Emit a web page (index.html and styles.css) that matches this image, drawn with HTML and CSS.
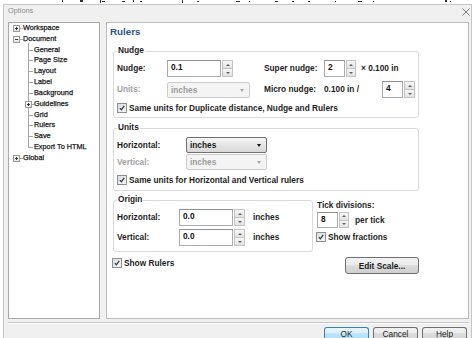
FILE: index.html
```html
<!DOCTYPE html>
<html>
<head>
<meta charset="utf-8">
<link rel="stylesheet" href="styles.css">
</head>
<body>
<svg class="behind" width="474" height="4" viewBox="0 0 474 4">
  <g fill="#333">
    <rect x="62" y="0" width="1" height="2"/><rect x="80" y="0" width="3" height="2"/><rect x="100" y="0" width="1" height="3"/>
    <rect x="102" y="1" width="3" height="1"/><rect x="122" y="1" width="3" height="1"/><rect x="133" y="0" width="1" height="2"/>
    <rect x="140" y="1" width="2" height="1"/><rect x="182" y="0" width="1" height="3"/><rect x="197" y="1" width="2" height="1"/>
    <rect x="236" y="1" width="4" height="1"/><rect x="249" y="1" width="1" height="1"/><rect x="275" y="1" width="3" height="1"/>
    <rect x="292" y="1" width="2" height="1"/><rect x="308" y="1" width="2" height="1"/><rect x="335" y="1" width="1" height="1"/>
    <rect x="358" y="1" width="4" height="1"/><rect x="373" y="1" width="1" height="1"/><rect x="445" y="0" width="2" height="2"/>
    <rect x="450" y="1" width="1" height="1"/>
  </g>
</svg>
<div class="dialog">
  <div class="titlebar">
    <span class="title">Options</span>
    <svg class="close" width="8" height="8" viewBox="0 0 8 8"><path d="M0.5 0.5 L7.5 7.5 M7.5 0.5 L0.5 7.5" stroke="#7a7a7a" stroke-width="1" fill="none"/></svg>
  </div>
  <div class="main">
    <div class="tree">
      <div class="node root"><span class="exp plus"></span>Workspace</div>
      <div class="node root"><span class="exp minus"></span>Document</div>
      <div class="children">
        <div class="node child">General</div>
        <div class="node child">Page Size</div>
        <div class="node child">Layout</div>
        <div class="node child">Label</div>
        <div class="node child">Background</div>
        <div class="node child haskids"><span class="exp plus"></span>Guidelines</div>
        <div class="node child">Grid</div>
        <div class="node child selected">Rulers</div>
        <div class="node child">Save</div>
        <div class="node child">Export To HTML</div>
      </div>
      <div class="node root"><span class="exp plus"></span>Global</div>
    </div>
    <div class="content">
      <div class="heading">Rulers</div>
      <div class="col">
        <div class="group nudge">
          <span class="legend">Nudge</span>
          <div class="row r17">
            <span class="lbl w50">Nudge:</span>
            <span class="field"><span class="input w54">0.1</span><span class="spin w11"><span class="up"></span><span class="down"></span></span></span>
            <span class="lbl w60 ml31">Super nudge:</span>
            <span class="field"><span class="input w21">2</span><span class="spin w10"><span class="up"></span><span class="down"></span></span></span>
            <span class="lbl ml5">× 0.100 in</span>
          </div>
          <div class="row r17 mt4">
            <span class="lbl w50 dis">Units:</span>
            <span class="select disabled w83">inches<span class="arrow"></span></span>
            <span class="lbl w60 ml14">Micro nudge:</span>
            <span class="lbl w58">0.100 in /</span>
            <span class="field"><span class="input w21">4</span><span class="spin w11"><span class="up"></span><span class="down"></span></span></span>
          </div>
          <div class="row r12 mt4">
            <span class="check"><svg width="10" height="10" viewBox="0 0 10 10"><path d="M2.3 5.2 L4.2 7.3 L7.8 2.4" stroke="#26344f" stroke-width="1.5" fill="none"/></svg></span>
            <span class="lbl">Same units for Duplicate distance, Nudge and Rulers</span>
          </div>
        </div>

        <div class="group units">
          <span class="legend">Units</span>
          <div class="row r16">
            <span class="lbl w69">Horizontal:</span>
            <span class="select w81">inches<span class="arrow"></span></span>
          </div>
          <div class="row r16 mt1">
            <span class="lbl w69 dis">Vertical:</span>
            <span class="select disabled w81">inches<span class="arrow"></span></span>
          </div>
          <div class="row r12 mt4">
            <span class="check"><svg width="10" height="10" viewBox="0 0 10 10"><path d="M2.3 5.2 L4.2 7.3 L7.8 2.4" stroke="#26344f" stroke-width="1.5" fill="none"/></svg></span>
            <span class="lbl">Same units for Horizontal and Vertical rulers</span>
          </div>
        </div>

        <div class="origin-row">
          <div class="group origin">
            <span class="legend">Origin</span>
            <div class="row r17">
              <span class="lbl w62">Horizontal:</span>
              <span class="field"><span class="input w54">0.0</span><span class="spin w11"><span class="up"></span><span class="down"></span></span></span>
              <span class="lbl ml8">inches</span>
            </div>
            <div class="row r17 mt3">
              <span class="lbl w62">Vertical:</span>
              <span class="field"><span class="input w54">0.0</span><span class="spin w11"><span class="up"></span><span class="down"></span></span></span>
              <span class="lbl ml8">inches</span>
            </div>
          </div>
          <div class="tick">
            <div class="lbl tick-title">Tick divisions:</div>
            <div class="row r16 mt2">
              <span class="field"><span class="input w21">8</span><span class="spin w10"><span class="up"></span><span class="down"></span></span></span>
              <span class="lbl ml6">per tick</span>
            </div>
            <div class="row r12 mt3">
              <span class="check"><svg width="10" height="10" viewBox="0 0 10 10"><path d="M2.3 5.2 L4.2 7.3 L7.8 2.4" stroke="#26344f" stroke-width="1.5" fill="none"/></svg></span>
              <span class="lbl">Show fractions</span>
            </div>
          </div>
        </div>

        <div class="bottom-row">
          <div class="row r12 show-rulers">
            <span class="check"><svg width="10" height="10" viewBox="0 0 10 10"><path d="M2.3 5.2 L4.2 7.3 L7.8 2.4" stroke="#26344f" stroke-width="1.5" fill="none"/></svg></span>
            <span class="lbl">Show Rulers</span>
          </div>
          <span class="btn edit">Edit Scale...</span>
        </div>
      </div>
    </div>
  </div>
  <div class="sep"></div>
  <div class="buttons">
    <span class="btn dlg default">OK</span>
    <span class="btn dlg">Cancel</span>
    <span class="btn dlg">Help</span>
  </div>
</div>
</body>
</html>
```
FILE: styles.css
```css
* { box-sizing: border-box; }
html, body { margin: 0; padding: 0; }
body {
  background: #fff;
  width: 474px;
  height: 338px;
  overflow: hidden;
  font-family: "Liberation Sans", Arial, sans-serif;
  color: #1e1e1e;
}
.behind { display: block; }

.dialog {
  margin-left: 3px;
  width: 469px;
  height: 334px;
  border: 1px solid #c6c6c6;
  border-bottom: none;
  background: #f0f0f0;
}
.titlebar {
  height: 17px;
  display: flex;
  align-items: flex-start;
  justify-content: space-between;
  padding: 1px 1px 0 4px;
}
.title {
  font-size: 7.3px;
  line-height: 10px;
  color: #8e8e8e;
}
.close { margin-top: 2px; margin-right: 0; }

.main {
  display: flex;
  gap: 6px;
  padding-left: 4px;
  height: 297px;
}

/* tree */
.tree {
  width: 92px;
  height: 297px;
  border: 1px solid #a9a9a9;
  background: #fff;
}
.node {
  position: relative;
  height: 10.83px;
  line-height: 10.83px;
  font-size: 7.3px;
  color: #1a1a1a;
  white-space: nowrap;
  -webkit-text-stroke: 0.25px #1a1a1a;
}
.root { padding-left: 14px; }
.child { padding-left: 25px; }
.exp {
  position: absolute;
  top: 2px;
  width: 7px;
  height: 7px;
  border: 1px solid #9a9a9a;
  background: linear-gradient(#ffffff, #e6e6e6);
  -webkit-text-stroke: 0;
}
.root .exp { left: 4px; }
.root .exp::after {
  content: "";
  position: absolute;
  left: 6px;
  top: 2px;
  width: 3px;
  height: 1px;
  background: #a8a8a8;
}
.exp::before {
  content: "";
  position: absolute;
  left: 1px;
  top: 2px;
  width: 3px;
  height: 1px;
  background: #333;
}
.plus {
  background:
    linear-gradient(#333, #333) 2px 1px / 1px 3px no-repeat,
    linear-gradient(#ffffff, #e6e6e6);
}
.children { position: relative; }
.children::before {
  content: "";
  position: absolute;
  left: 19px;
  top: -2px;
  bottom: 5px;
  width: 1px;
  background: #a8a8a8;
}
.child::before {
  content: "";
  position: absolute;
  left: 20px;
  top: 5px;
  width: 4px;
  height: 1px;
  background: #a8a8a8;
}
.haskids .exp { left: 16px; z-index: 1; }
.haskids::before { left: 23px; width: 2px; }

/* content panel */
.content {
  width: 363px;
  height: 297px;
  border: 1px solid #bcbcbc;
  background: #fff;
}
.heading {
  margin: 3px 0 0 3px;
  font-size: 9.8px;
  line-height: 12px;
  font-weight: bold;
  color: #2c5592;
}
.col {
  margin-left: 6px;
  width: 306px;
  margin-top: 13px;
}
.group {
  position: relative;
  border: 1px solid #dadada;
  border-radius: 3px;
}
.legend {
  position: absolute;
  top: -7px;
  left: 3px;
  padding: 0 1px;
  background: #fff;
  font-size: 8.3px;
  line-height: 11px;
  font-weight: bold;
}
.nudge { padding: 8px 0 3px 3px; }
.units { margin-top: 10px; padding: 8px 0 4px 3px; }
.origin { width: 200px; padding: 8px 0 5px 3px; }

.row { display: flex; align-items: center; }
.r17 { height: 17px; }
.r16 { height: 16px; }
.r12 { height: 12px; }
.mt1 { margin-top: 1px; }
.mt2 { margin-top: 2px; }
.mt3 { margin-top: 3px; }
.mt4 { margin-top: 4px; }

.lbl {
  font-size: 8.3px;
  font-weight: bold;
  line-height: 11px;
  white-space: nowrap;
  color: #1e1e1e;
}
.dis { color: #a2a2a2; }
.w50 { width: 50px; flex: none; }
.w58 { width: 58px; flex: none; }
.w60 { width: 60px; flex: none; }
.w62 { width: 62px; flex: none; }
.w69 { width: 69px; flex: none; }
.ml5 { margin-left: 5px; }
.ml6 { margin-left: 6px; }
.ml8 { margin-left: 8px; }
.ml14 { margin-left: 14px; }
.ml31 { margin-left: 31px; }

.field { display: flex; height: 17px; }
.r16 .field { height: 16px; }
.input {
  height: 100%;
  border: 1px solid #a9abb2;
  border-top-color: #8e9096;
  background: #fff;
  font-size: 8.3px;
  font-weight: bold;
  line-height: 12px;
  padding-left: 3px;
  color: #111;
}
.w54 { width: 54px; }
.w21 { width: 21px; }
.w81 { width: 81px; }
.w83 { width: 83px; }
.spin {
  display: flex;
  flex-direction: column;
  height: 100%;
  margin-left: 1px;
}
.w11 { width: 11px; }
.w10 { width: 10px; }
.spin span {
  position: relative;
  flex: 1;
  border: 1px solid #c4c4c4;
  background: linear-gradient(#f7f7f7, #e2e2e2);
}
.spin span + span { margin-top: -1px; }
.spin .up::after, .spin .down::after {
  content: "";
  position: absolute;
  left: 50%;
  top: 50%;
  margin-left: -2px;
  margin-top: -1px;
  border-left: 2px solid transparent;
  border-right: 2px solid transparent;
}
.spin .up::after { border-bottom: 2px solid #606060; }
.spin .down::after { border-top: 2px solid #606060; }

.select {
  position: relative;
  height: 16px;
  border: 1px solid #707070;
  border-radius: 2px;
  background: linear-gradient(#f6f6f6, #e6e6e6 50%, #d8d8d8);
  font-size: 8.3px;
  font-weight: bold;
  line-height: 14px;
  padding-left: 3px;
  color: #1a1a1a;
}
.select.disabled {
  border-color: #cdcdcd;
  background: #f4f4f4;
  color: #9c9c9c;
}
.select .arrow {
  position: absolute;
  right: 5px;
  top: 6px;
  border-left: 2.5px solid transparent;
  border-right: 2.5px solid transparent;
  border-top: 3px solid #111;
}
.select.disabled .arrow { border-top-color: #aaa; }

.check {
  width: 10px;
  height: 10px;
  flex: none;
  margin-right: 2px;
  border: 1px solid #8e8f8f;
  background: linear-gradient(135deg, #dcdcdc, #f8f8f8);
  display: flex;
  align-items: center;
  justify-content: center;
}
.check svg { display: block; width: 8px; height: 8px; }

.origin-row {
  display: flex;
  align-items: flex-start;
  margin-top: 9px;
}
.tick { margin-left: 3px; }
.tick-title { line-height: 10px; margin-left: 1px; }
.tick .field { margin-left: 1px; }

.bottom-row {
  display: flex;
  align-items: flex-start;
  margin-top: 5px;
}
.show-rulers { margin-left: -1px; margin-top: 0; }

.btn {
  display: flex;
  align-items: center;
  justify-content: center;
  height: 17px;
  border: 1px solid #707070;
  border-radius: 3px;
  background: linear-gradient(#f2f2f2, #ebebeb 50%, #dddddd 50%, #cfcfcf);
  font-size: 8.3px;
  color: #1e1e1e;
}
.edit {
  margin-left: auto;
  width: 74px;
  font-weight: bold;
}

.sep {
  margin: 3px 2px 0 4px;
  height: 2px;
  border-top: 1px solid #c8c8c8;
  border-bottom: 1px solid #fff;
}
.buttons {
  display: flex;
  justify-content: flex-end;
  gap: 4px;
  padding-right: 4px;
  margin-top: 3px;
}
.dlg {
  width: 45px;
  height: 11px;
  align-items: flex-start;
  border-bottom: none;
  border-radius: 3px 3px 0 0;
  line-height: 10px;
  padding-top: 1px;
  background: linear-gradient(#f2f2f2, #ebebeb 55%, #dddddd 55%, #d6d6d6);
}
.default {
  border-color: #3c7fb1;
  background: linear-gradient(#eaf6fd, #d9f0fc 55%, #bee6fd 55%, #b4dff7);
}
```
